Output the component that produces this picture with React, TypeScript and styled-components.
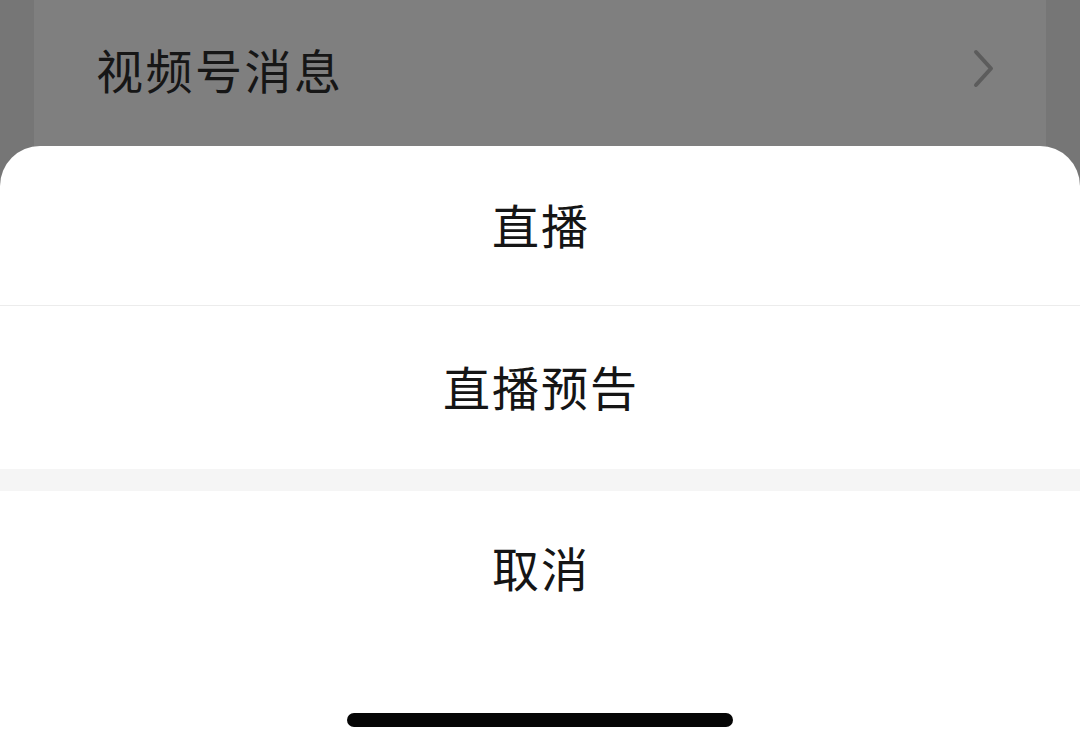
import React from "react";
import styled, { createGlobalStyle } from "styled-components";

const GlobalStyle = createGlobalStyle`
  html, body {
    margin: 0;
    padding: 0;
    width: 1080px;
    height: 751px;
    overflow: hidden;
    background: #767676;
  }
  body {
    font-family: "Noto Sans CJK SC", "Noto Sans", sans-serif;
  }
`;

const Page = styled.div`
  position: relative;
  width: 1080px;
  height: 751px;
  background: #767676;
  display: flex;
  justify-content: center;
`;

const Panel = styled.div`
  width: 1012px;
  background: #7f7f7f;
  display: flex;
  flex-direction: column;
`;

const ListRow = styled.div`
  height: 140px;
  display: flex;
  align-items: center;
  justify-content: space-between;
  padding: 0 50px 0 62px;
  box-sizing: border-box;
`;

const RowLabel = styled.span`
  font-size: 47px;
  color: #161616;
  letter-spacing: 2.5px;
  line-height: 1;
  margin-top: -4px;
`;

const Chevron = styled.svg`
  width: 24px;
  height: 40px;
  margin-top: -2px;
`;

const Sheet = styled.div`
  position: absolute;
  left: 0;
  right: 0;
  top: 146px;
  bottom: 0;
  background: #ffffff;
  border-radius: 40px 40px 0 0;
  display: flex;
  flex-direction: column;
  overflow: hidden;
`;

const SheetItem = styled.div<{ $h: number; $divider?: boolean }>`
  height: ${(p) => p.$h}px;
  flex: none;
  display: flex;
  align-items: center;
  justify-content: center;
  font-size: 47px;
  color: #151515;
  letter-spacing: 2px;
  text-indent: 2px;
  border-bottom: ${(p) => (p.$divider ? "1.5px solid #ececec" : "none")};
  box-sizing: border-box;
  padding-bottom: 4px;
`;

const GapBand = styled.div`
  height: 22px;
  flex: none;
  background: #f5f5f5;
`;

const HomeBar = styled.div`
  flex: 1;
  display: flex;
  align-items: flex-start;
  justify-content: center;
  padding-top: 68px;
`;

const Indicator = styled.div`
  width: 386px;
  height: 14px;
  border-radius: 7px;
  background: #050505;
`;

export default function App() {
  return (
    <>
      <GlobalStyle />
      <Page>
        <Panel>
          <ListRow>
            <RowLabel>视频号消息</RowLabel>
            <Chevron viewBox="0 0 24 40">
              <path
                d="M4 3 L19 19.5 L4 36"
                fill="none"
                stroke="#5c5c5c"
                strokeWidth="4"
                strokeLinecap="round"
                strokeLinejoin="round"
              />
            </Chevron>
          </ListRow>
        </Panel>
        <Sheet>
          <SheetItem $h={160} $divider>
            直播
          </SheetItem>
          <SheetItem $h={163}>直播预告</SheetItem>
          <GapBand />
          <SheetItem $h={154}>取消</SheetItem>
          <HomeBar>
            <Indicator />
          </HomeBar>
        </Sheet>
      </Page>
    </>
  );
}
